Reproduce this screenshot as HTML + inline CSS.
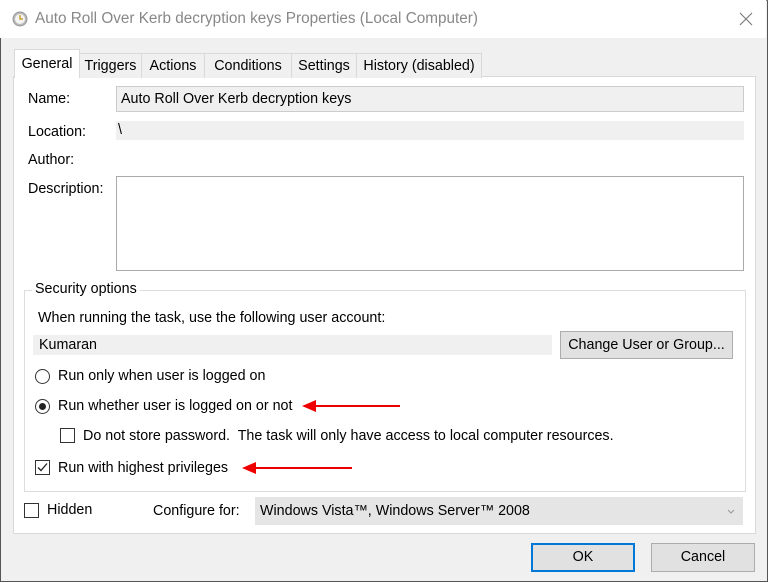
<!DOCTYPE html>
<html><head><style>
body{margin:0;width:768px;height:583px;overflow:hidden;background:#fff;font-family:"Liberation Sans",sans-serif;font-size:14.3px;color:#000;position:relative}
.a{position:absolute;white-space:nowrap}
.win{position:absolute;left:0;top:0;width:766px;height:580px;border:1px solid #555;border-top:1px solid #888;background:#f0f0f0}
.title{position:absolute;left:0;top:0;width:766px;height:38px;background:#fff}
.tab{position:absolute;top:53px;height:24px;border:1px solid #d9d9d9;border-bottom:none;background:#f0f0f0;line-height:24px;text-align:center}
.panel{position:absolute;left:13px;top:76px;width:741px;height:456px;background:#fff;border:1px solid #d9d9d9}
.rad{position:absolute;width:13px;height:13px;border:1px solid #333;border-radius:50%;background:#fff}
.chk{position:absolute;width:13px;height:13px;border:1px solid #333;background:#fff}
.btn{position:absolute;background:#e1e1e1;border:1px solid #adadad;text-align:center}
.arrow{position:absolute;height:2px;background:#e00}
</style></head><body>
<div class="win"></div>
<div class="title"></div>
<svg class="a" style="left:12px;top:11px" width="16" height="16"><circle cx="8" cy="8" r="7" fill="#b8b8b8" stroke="#999"/><circle cx="8" cy="8" r="5" fill="#f4f4f4"/><path d="M8 4v4h3" stroke="#c9a030" stroke-width="1.5" fill="none"/></svg>
<div class="a" style="left:35px;top:10px;font-size:15.3px;color:#888">Auto Roll Over Kerb decryption keys Properties (Local Computer)</div>
<svg class="a" style="left:739px;top:12px" width="14" height="14"><path d="M1 1L13 13M13 1L1 13" stroke="#777" stroke-width="1.1"/></svg>
<div class="panel"></div>
<div class="tab" style="left:14px;top:49px;height:28px;width:64px;background:#fff;line-height:28px;z-index:2">General</div>
<div class="tab" style="left:79px;width:61px">Triggers</div>
<div class="tab" style="left:141px;width:62px">Actions</div>
<div class="tab" style="left:204px;width:86px">Conditions</div>
<div class="tab" style="left:291px;width:64px">Settings</div>
<div class="tab" style="left:356px;width:124px">History (disabled)</div>
<div class="a" style="left:28px;top:91px">Name:</div>
<div class="a" style="left:116px;top:86px;width:622px;height:24px;background:#f0f0f0;border:1px solid #ccc;line-height:24px;padding-left:4px">Auto Roll Over Kerb decryption keys</div>
<div class="a" style="left:28px;top:124px">Location:</div>
<div class="a" style="left:116px;top:121px;width:626px;height:19px;background:#f0f0f0;line-height:19px;padding-left:2px">\</div>
<div class="a" style="left:28px;top:152px">Author:</div>
<div class="a" style="left:28px;top:181px">Description:</div>
<div class="a" style="left:116px;top:176px;width:626px;height:93px;border:1px solid #aaa;background:#fff"></div>
<div class="a" style="left:24px;top:290px;width:720px;height:200px;border:1px solid #dcdcdc"></div>
<div class="a" style="left:32px;top:281px;background:#fff;padding:0 3px">Security options</div>
<div class="a" style="left:38px;top:310px">When running the task, use the following user account:</div>
<div class="a" style="left:33px;top:335px;width:513px;height:20px;background:#f0f0f0;line-height:20px;padding-left:6px">Kumaran</div>
<div class="btn" style="left:560px;top:331px;width:171px;height:26px;line-height:26px">Change User or Group...</div>
<div class="rad" style="left:35px;top:369px"></div>
<div class="a" style="left:58px;top:368px">Run only when user is logged on</div>
<div class="rad" style="left:35px;top:399px"></div>
<div class="a" style="left:39px;top:403px;width:7px;height:7px;border-radius:50%;background:#222"></div>
<div class="a" style="left:58px;top:398px">Run whether user is logged on or not</div>
<div class="arrow" style="left:310px;top:405px;width:90px"></div>
<svg class="a" style="left:302px;top:400px" width="14" height="12"><path d="M0 6L14 0V12Z" fill="#e00"/></svg>
<div class="chk" style="left:60px;top:428px"></div>
<div class="a" style="left:83px;top:428px">Do not store password.&nbsp; The task will only have access to local computer resources.</div>
<div class="chk" style="left:35px;top:460px"></div>
<svg class="a" style="left:36px;top:461px" width="13" height="13"><path d="M2 6.5L5 9.5L11 2.5" stroke="#222" stroke-width="1.3" fill="none"/></svg>
<div class="a" style="left:58px;top:460px">Run with highest privileges</div>
<div class="arrow" style="left:252px;top:467px;width:100px"></div>
<svg class="a" style="left:242px;top:462px" width="14" height="12"><path d="M0 6L14 0V12Z" fill="#e00"/></svg>
<div class="chk" style="left:24px;top:503px"></div>
<div class="a" style="left:47px;top:502px">Hidden</div>
<div class="a" style="left:153px;top:503px">Configure for:</div>
<div class="a" style="left:255px;top:497px;width:488px;height:28px;background:#e5e5e5;line-height:28px;padding-left:5px;box-sizing:border-box">Windows Vista™, Windows Server™ 2008</div>
<svg class="a" style="left:727px;top:509px" width="8" height="6"><path d="M1 1L4 4L7 1" stroke="#999" fill="none"/></svg>
<div class="btn" style="left:531px;top:543px;width:100px;height:25px;line-height:25px;border:2px solid #0078d7">OK</div>
<div class="btn" style="left:651px;top:543px;width:102px;height:27px;line-height:27px">Cancel</div>
</body></html>
